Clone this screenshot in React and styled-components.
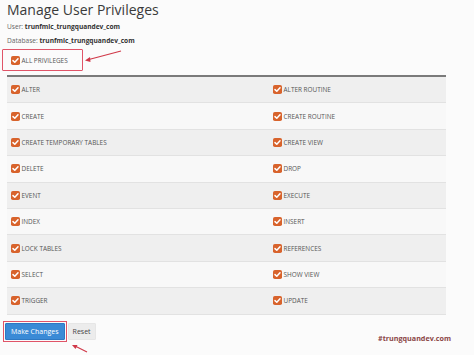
import React from "react";
import styled, { createGlobalStyle } from "styled-components";

const Global = createGlobalStyle`
  html, body {
    margin: 0;
    background: #fbfbfb;
  }
  body {
    font-family: "Open Sans", "Liberation Sans", sans-serif;
    color: #555;
  }
`;

const Page = styled.div`
  position: relative;
  width: 474px;
  height: 355px;
  overflow: hidden;
  padding: 0 7px;
  box-sizing: border-box;
`;

const Title = styled.h1`
  margin: 0;
  font-size: 14px;
  line-height: 20px;
  font-weight: 400;
  color: #3a3a3a;
`;

const Meta = styled.div`
  font-size: 6.6px;
  line-height: 14px;
  color: #666;
  b {
    color: #333;
    font-weight: 700;
  }
`;

const Highlight = styled.div`
  display: flex;
  align-items: center;
  width: 71px;
  height: 20px;
  margin: 1px 0 4px -5px;
  padding-left: 8px;
  border: 1.5px solid #e05468;
  border-radius: 1px;
`;

const Label = styled.span`
  display: flex;
  align-items: center;
  gap: 1.5px;
  font-size: 6.4px;
  color: #555;
  text-transform: uppercase;
`;

const Table = styled.div`
  width: 439px;
  border-top: 2px solid #7a7a7a;
`;

const Row = styled.div`
  display: grid;
  grid-template-columns: 262px 1fr;
  align-items: center;
  height: 26.4px;
  padding-left: 4px;
  box-sizing: border-box;
  background: ${(p) => (p.$odd ? "#efefef" : "#f8f8f8")};
  border-bottom: 1px solid #e2e2e2;
`;

const Actions = styled.div`
  display: flex;
  align-items: center;
  gap: 1px;
  margin-top: 6px;
`;

const RedFrame = styled.div`
  margin-left: -4px;
  padding: 1px;
  border: 1.5px solid #e05468;
`;

const Button = styled.button`
  display: block;
  font-family: inherit;
  font-size: 7px;
  height: 17px;
  padding: 0 ${(p) => (p.$primary ? "5px" : "4px")};
  border: 1px solid ${(p) => (p.$primary ? "#2e78c2" : "#e6e6e6")};
  border-radius: 1px;
  background: ${(p) => (p.$primary ? "#3a8ad6" : "#ececec")};
  color: ${(p) => (p.$primary ? "#fff" : "#444")};
  cursor: pointer;
`;

const Watermark = styled.div`
  position: absolute;
  right: 23px;
  bottom: 12px;
  font-size: 7.2px;
  font-weight: 700;
  color: #8a4545;
`;

const Arrow = styled.svg`
  position: absolute;
  overflow: visible;
`;

function Check() {
  return (
    <svg width="9" height="9" viewBox="0 0 9 9">
      <rect x="0" y="0" width="9" height="9" rx="1.8" fill="#d8632c" />
      <path d="M2 4.6 L3.8 6.3 L7 2.8" stroke="#fff" strokeWidth="1.5" fill="none" strokeLinecap="round" strokeLinejoin="round" />
    </svg>
  );
}

const rows = [
  ["ALTER", "ALTER ROUTINE"],
  ["CREATE", "CREATE ROUTINE"],
  ["CREATE TEMPORARY TABLES", "CREATE VIEW"],
  ["DELETE", "DROP"],
  ["EVENT", "EXECUTE"],
  ["INDEX", "INSERT"],
  ["LOCK TABLES", "REFERENCES"],
  ["SELECT", "SHOW VIEW"],
  ["TRIGGER", "UPDATE"],
];

export default function App() {
  return (
    <Page>
      <Global />
      <Title>Manage User Privileges</Title>
      <Meta>
        User: <b>trunfmic_trungquandev_com</b>
      </Meta>
      <Meta>
        Database: <b>trunfmic_trungquandev_com</b>
      </Meta>
      <Highlight>
        <Label>
          <Check />
          All Privileges
        </Label>
      </Highlight>
      <Table>
        {rows.map(([a, b], i) => (
          <Row key={a} $odd={i % 2 === 0}>
            <Label>
              <Check />
              {a}
            </Label>
            <Label>
              <Check />
              {b}
            </Label>
          </Row>
        ))}
      </Table>
      <Actions>
        <RedFrame>
          <Button $primary>Make Changes</Button>
        </RedFrame>
        <Button>Reset</Button>
      </Actions>
      <Watermark>#trungquandev.com</Watermark>

      <Arrow style={{ left: 84, top: 50 }} width="40" height="14">
        <path d="M37 1 L3 10" stroke="#d03848" strokeWidth="1.2" />
        <path d="M1 10.5 L6 7 L6.5 12 Z" fill="#d03848" />
      </Arrow>
      <Arrow style={{ left: 71, top: 344 }} width="18" height="10">
        <path d="M16 8 L3 1.5" stroke="#d03848" strokeWidth="1.2" />
        <path d="M1 1 L6.5 1 L4.5 5 Z" fill="#d03848" />
      </Arrow>
    </Page>
  );
}
